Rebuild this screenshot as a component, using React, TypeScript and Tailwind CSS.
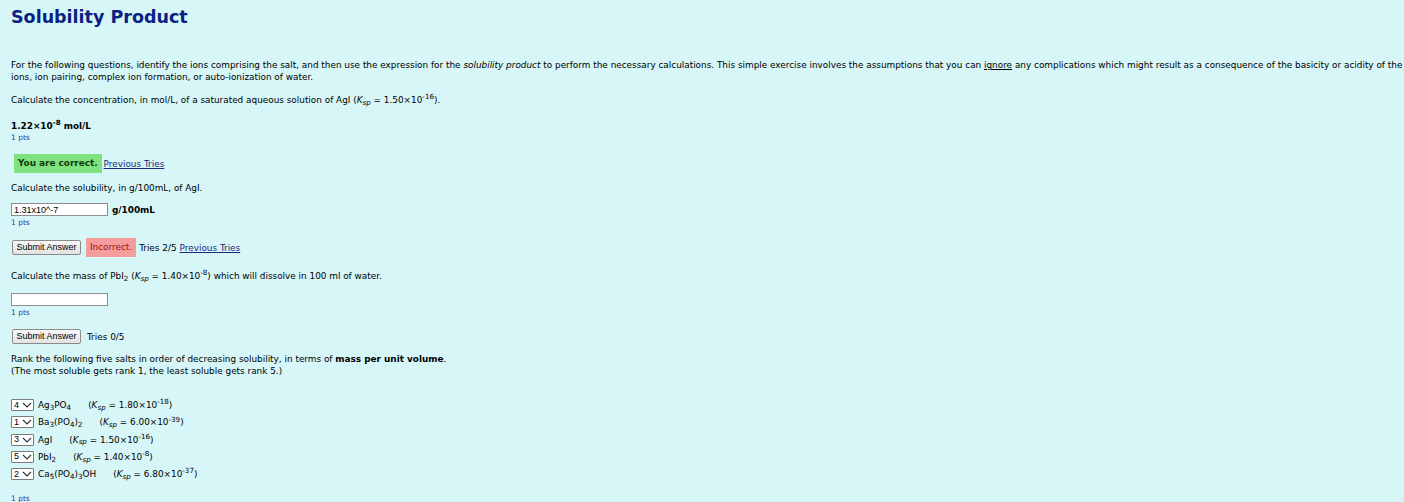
import React from 'react';

const Sub = ({ children }: { children: React.ReactNode }) => <sub className="text-[0.8em]">{children}</sub>;

const Ksp = ({ value, exp }: { value: string; exp: string }) => (
  <span>
    (<i>K</i>
    <sub className="italic text-[0.8em]">sp</sub> = {value}×10
    <sup className="text-[0.8em]">{exp}</sup>)
  </span>
);

const Pts = ({ className = '' }: { className?: string }) => (
  <div className={`text-[7.5px] leading-[12px] text-[#1f3f9e] ${className}`}>1 pts</div>
);

const SubmitButton = () => (
  <button className="h-[15px] w-[69px] border border-[#8a8a8a] rounded-[2px] bg-gradient-to-b from-[#f8f8f8] to-[#e2e2e2] text-[9px] leading-[13px] text-black font-['Liberation_Sans',Arial,sans-serif]">
    Submit Answer
  </button>
);

const RankSelect = ({ value }: { value: string }) => (
  <span className="inline-flex items-center h-[12px] w-[23px] border border-[#7a7a7a] bg-white rounded-[1px] pl-[2px] gap-[2px] text-[9px] leading-none font-['Liberation_Sans',Arial,sans-serif]">
    {value}
    <svg width="10" height="6" viewBox="0 0 10 6" className="ml-[1px]">
      <path d="M1 1 L5 5 L9 1" fill="none" stroke="#333" strokeWidth="1.1" />
    </svg>
  </span>
);

const salts: { rank: string; name: React.ReactNode; value: string; exp: string }[] = [
  { rank: '4', name: <>Ag<Sub>3</Sub>PO<Sub>4</Sub></>, value: '1.80', exp: '-18' },
  { rank: '1', name: <>Ba<Sub>3</Sub>(PO<Sub>4</Sub>)<Sub>2</Sub></>, value: '6.00', exp: '-39' },
  { rank: '3', name: <>AgI</>, value: '1.50', exp: '-16' },
  { rank: '5', name: <>PbI<Sub>2</Sub></>, value: '1.40', exp: '-8' },
  { rank: '2', name: <>Ca<Sub>5</Sub>(PO<Sub>4</Sub>)<Sub>3</Sub>OH</>, value: '6.80', exp: '-37' },
];

export default function App() {
  return (
    <div className="min-h-[502px] bg-[#d6f6f8] text-black font-['DejaVu_Sans',Verdana,sans-serif] text-[8.9px] leading-[12px] pl-[11px] pr-0 pt-[6px] pb-4 overflow-hidden">
      {/* Title */}
      <h1 className="text-[17.5px] leading-[22px] font-bold text-[#0b1f85]">Solubility Product</h1>

      {/* Intro */}
      <p className="mt-[31px]">
        For the following questions, identify the ions comprising the salt, and then use the expression for the{' '}
        <i>solubility product</i> to perform the necessary calculations. This simple exercise involves the assumptions that
        you can <u>ignore</u> any complications which might result as a consequence of the basicity or acidity of the ions,
        ion pairing, complex ion formation, or auto-ionization of water.
      </p>

      {/* Question 1 */}
      <p className="mt-[11px]">
        Calculate the concentration, in mol/L, of a saturated aqueous solution of AgI <Ksp value="1.50" exp="-16" />.
      </p>
      <div className="mt-[14px] font-bold">
        1.22×10<sup className="text-[0.8em]">-8</sup> mol/L
      </div>
      <Pts />
      <div className="mt-[10px] flex items-center">
        <span className="ml-[3px] bg-[#7fe27f] px-[4px] h-[19px] leading-[19px] font-bold text-[#0d3a0d]">You are correct.</span>
        <a href="#" className="ml-[2px] underline text-[#1a2a7a]">Previous Tries</a>
      </div>

      {/* Question 2 */}
      <p className="mt-[9px]">Calculate the solubility, in g/100mL, of AgI.</p>
      <div className="mt-[9px] flex items-center h-[13px] gap-[4px]">
        <input
          defaultValue="1.31x10^-7"
          className="w-[97px] h-[13px] border border-[#8d8d8d] bg-white px-[2px] text-[9px] leading-none font-['Liberation_Sans',Arial,sans-serif] outline-none"
        />
        <span className="font-bold">g/100mL</span>
      </div>
      <Pts className="mt-[1px]" />
      <div className="mt-[9px] flex items-center h-[19px]">
        <span className="ml-[1px] flex"><SubmitButton /></span>
        <span className="ml-[5px] bg-[#f59c9c] px-[4px] h-[19px] leading-[19px] text-[#9a1010]">Incorrect.</span>
        <span className="ml-[3px]">Tries 2/5</span>
        <a href="#" className="ml-[3px] underline text-[#1a2a7a]">Previous Tries</a>
      </div>

      {/* Question 3 */}
      <p className="mt-[13px]">
        Calculate the mass of PbI<Sub>2</Sub> <Ksp value="1.40" exp="-8" /> which will dissolve in 100 ml of water.
      </p>
      <div className="mt-[11px] h-[13px]">
        <input className="block w-[97px] h-[13px] border border-[#8d8d8d] bg-white outline-none" />
      </div>
      <Pts className="mt-[1px]" />
      <div className="mt-[10px] flex items-center h-[15px] gap-[6px]">
        <span className="ml-[1px] flex"><SubmitButton /></span>
        <span>Tries 0/5</span>
      </div>

      {/* Question 4 */}
      <p className="mt-[9px]">
        Rank the following five salts in order of decreasing solubility, in terms of <b>mass per unit volume</b>.
        <br />
        (The most soluble gets rank 1, the least soluble gets rank 5.)
      </p>
      <div className="mt-[22px] flex flex-col gap-[5.25px]">
        {salts.map((s) => (
          <div key={s.rank} className="flex items-center h-[12px]">
            <RankSelect value={s.rank} />
            <span className="ml-[4px]">{s.name}</span>
            <span className="ml-[17px]"><Ksp value={s.value} exp={s.exp} /></span>
          </div>
        ))}
      </div>
      <Pts className="mt-[13px]" />
    </div>
  );
}
